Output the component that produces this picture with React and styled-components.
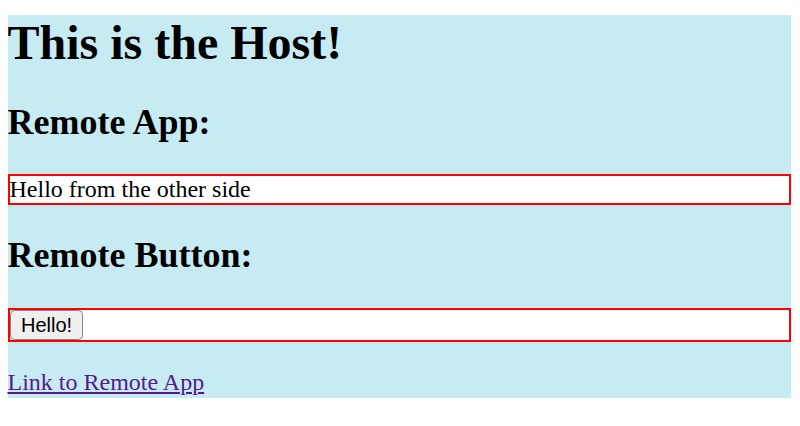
import React from "react";
import styled, { createGlobalStyle } from "styled-components";

const GlobalStyle = createGlobalStyle`
  html, body {
    margin: 0;
    padding: 0;
    background: #ffffff;
  }
`;

const Host = styled.div`
  background: #c7ebf3;
  margin: 15px 9px 0 7.5px;
  padding-bottom: 1px;
  font-family: "Liberation Serif", "Times New Roman", serif;
  color: #000000;
  display: flex;
  flex-direction: column;
`;

const Title = styled.h1`
  font-size: 48px;
  line-height: 55px;
  font-weight: 700;
  margin: 0 0 32px;
`;

const SectionTitle = styled.h2`
  font-size: 36px;
  line-height: 41.5px;
  font-weight: 700;
  margin: 0 0 ${(p) => p.$gap}px;
`;

const RemoteFrame = styled.div`
  display: flex;
  align-items: flex-start;
  border: 2px solid #ff0000;
  background: #ffffff;
  font-size: 24px;
  line-height: 27.6px;
  min-height: ${(p) => p.$minHeight || 0}px;
  margin-bottom: ${(p) => p.$gap}px;
`;

const RemoteButton = styled.button`
  font-family: "Liberation Sans", Arial, sans-serif;
  font-size: 20px;
  line-height: 23px;
  height: 30.5px;
  margin: 0 0 0 0.5px;
  padding: 1px 10px 0;
  color: #000000;
  background: #efefef;
  border: 1.5px solid #858585;
  border-radius: 4.5px;
  cursor: pointer;
`;

const LinkRow = styled.p`
  margin: 0;
  font-size: 24px;
  line-height: 27.6px;
`;

const RemoteLink = styled.a`
  color: #551a8b;
  text-decoration: underline;
  text-underline-offset: 2px;
`;

export default function App() {
  return (
    <>
      <GlobalStyle />
      <Host>
        <Title>This is the Host!</Title>
        <SectionTitle $gap={30}>Remote App:</SectionTitle>
        <RemoteFrame $gap={30}>Hello from the other side</RemoteFrame>
        <SectionTitle $gap={31}>Remote Button:</SectionTitle>
        <RemoteFrame $gap={27} $minHeight={30}>
          <RemoteButton type="button">Hello!</RemoteButton>
        </RemoteFrame>
        <LinkRow>
          <RemoteLink href="#remote">Link to Remote App</RemoteLink>
        </LinkRow>
      </Host>
    </>
  );
}
